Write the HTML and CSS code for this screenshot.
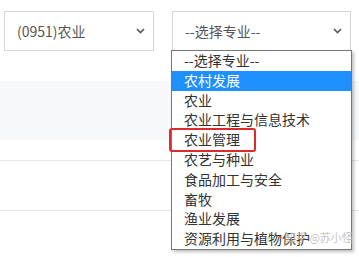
FILE: index.html
```html
<!DOCTYPE html>
<html lang="zh-CN">
<head>
    <meta charset="UTF-8">
    <title>选择专业</title>
    <link rel="stylesheet" href="styles.css">
</head>
<body>
    <div class="form-row">
        <div class="select select-subject">
            <span>(0951)农业</span>
            <svg class="chevron" width="9" height="6" viewBox="0 0 9 6"><path d="M1 1l3.5 3.5L8 1" fill="none" stroke="#555" stroke-width="1.6"/></svg>
        </div>
        <div class="select select-major">
            <span>--选择专业--</span>
            <svg class="chevron" width="9" height="6" viewBox="0 0 9 6"><path d="M1 1l3.5 3.5L8 1" fill="none" stroke="#555" stroke-width="1.6"/></svg>
        </div>
    </div>

    <!-- rows behind the open list -->
    <div class="band"></div>
    <div class="row row-short"></div>
    <div class="row row-tall"></div>

    <!-- opened native list -->
    <ul class="dropdown">
        <li>--选择专业--</li>
        <li class="active">农村发展</li>
        <li>农业</li>
        <li>农业工程与信息技术</li>
        <li><span class="mark">农业管理</span></li>
        <li>农艺与种业</li>
        <li>食品加工与安全</li>
        <li>畜牧</li>
        <li>渔业发展</li>
        <li>资源利用与植物保护</li>
    </ul>

    <div class="watermark">知乎 @苏小怪</div>
</body>
</html>
```

FILE: styles.css
```css
body{
    margin: 0;
    font-family: "Noto Sans CJK SC", "Noto Sans", sans-serif;
    font-size: 14px;
    color: #333;
    background: #fff;
}
.form-row{
    display: flex;
    gap: 18px;
    padding: 11px 0 0 4px;
}
.select{
    display: flex;
    align-items: center;
    justify-content: space-between;
    box-sizing: border-box;
    height: 40px;
    padding: 0 8px 0 12px;
    border: 1px solid #d6d6d6;
    color: #555;
    background: #fff;
}
.select-subject{
    width: 150px;
}
.select-major{
    width: 179px;
}
.chevron{
    display: block;
}
.band{
    height: 59px;
    margin-top: 30px;
    background: #f7f8fa;
}
.row{
    border-bottom: 1px solid #e6e6e6;
}
.row-short{
    height: 20px;
}
.row-tall{
    height: 49px;
}
.dropdown{
    position: absolute;
    top: 50px;
    left: 171px;
    width: 179px;
    margin: 0;
    padding: 0;
    list-style: none;
    background: #fff;
    border: 1px solid #767676;
    box-shadow: 2px 2px 3px rgba(0,0,0,.25);
}
.dropdown li{
    height: 19.8px;
    line-height: 19.8px;
    padding-left: 12px;
    color: #333;
    white-space: nowrap;
}
.dropdown li.active{
    background: #1e90ff;
    color: #fff;
}
.mark{
    position: relative;
}
.mark::after{
    content: "";
    position: absolute;
    left: -15px;
    right: -16px;
    top: -1px;
    bottom: -3px;
    border: 2.5px solid #dc2a2e;
    border-radius: 3px;
}
.watermark{
    position: absolute;
    top: 229px;
    left: 285px;
    font-size: 11px;
    color: rgba(150,150,150,.6);
    white-space: nowrap;
    text-shadow: 0 0 1px #fff;
}
```
